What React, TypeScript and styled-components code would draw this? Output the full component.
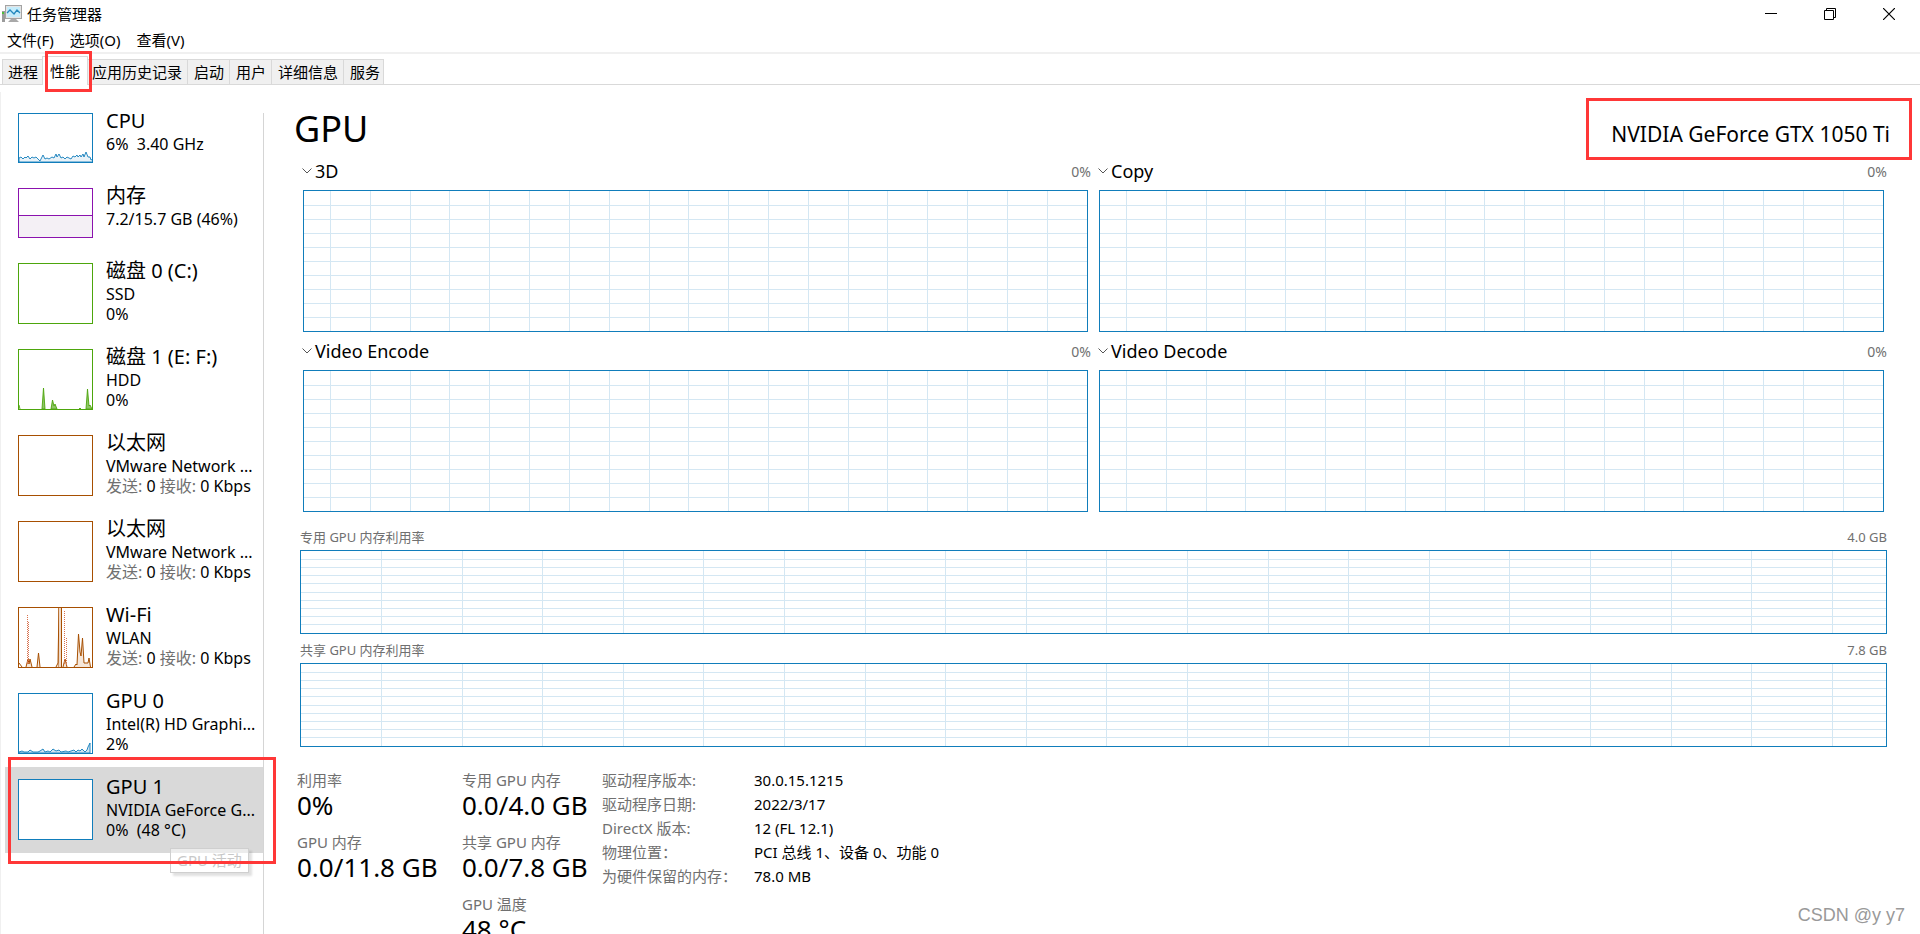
import React from "react";
import styled, { createGlobalStyle, css } from "styled-components";

const BLUE = "#117dbb";
const PURPLE = "#8b12ae";
const GREEN = "#4da60c";
const BROWN = "#a74f01";

const GlobalStyle = createGlobalStyle`
  * { box-sizing: border-box; }
  body {
    margin: 0;
    background: #fff;
    color: #000;
    font-family: "Noto Sans", "Noto Sans CJK SC", sans-serif;
    font-size: 15px;
  }
  button { font: inherit; color: inherit; border: 0; background: none; padding: 0; }
  h1, h2, p, dl, dd, dt, ul { margin: 0; padding: 0; font-weight: 400; }
  ul { list-style: none; }
`;

const Window = styled.div`
  display: flex;
  flex-direction: column;
  height: 100vh;
  overflow: hidden;
  position: relative;
`;

const TitleBar = styled.header`
  display: flex;
  align-items: center;
  height: 28px;
  padding: 0 2px;
  flex: none;
`;

const AppTitle = styled.span`
  flex: 1;
  margin-left: 5px;
  line-height: 28px;
`;

const WindowButton = styled.button`
  display: flex;
  align-items: center;
  justify-content: center;
  width: 59px;
  height: 28px;
`;

const MenuBar = styled.nav`
  display: flex;
  gap: 16px;
  height: 26px;
  padding-left: 7px;
  border-bottom: 2px solid #f0f0f0;
  flex: none;
`;

const MenuItem = styled.button`
  line-height: 24px;
  height: 24px;
`;

const TabStrip = styled.div`
  display: flex;
  align-items: flex-end;
  height: 31px;
  padding-left: 2px;
  border-bottom: 1px solid #d9d9d9;
  flex: none;
`;

const Tab = styled.button<{ $active?: boolean }>`
  position: relative;
  height: 25px;
  line-height: 24px;
  padding: 0 5px 0 6px;
  background: #f0f0f0;
  border-top: 1px solid #d9d9d9;
  border-right: 1px solid #d9d9d9;
  white-space: nowrap;
  &:first-child { border-left: 1px solid #d9d9d9; padding-left: 5px; }
  &:last-child { padding-right: 3px; }
  ${(p) =>
    p.$active &&
    css`
      z-index: 1;
      height: 29px;
      line-height: 26px;
      padding: 0 7px;
      margin: 0 -2px -1px;
      background: #fff;
      border-left: 1px solid #d9d9d9;
    `}
`;

const Highlight = styled.span<{ $inset: string }>`
  position: absolute;
  inset: ${(p) => p.$inset};
  border: 3px solid #ff3737;
  pointer-events: none;
  z-index: 3;
`;

const Body = styled.div`
  display: flex;
  flex: 1;
  min-height: 0;
  margin-top: 7px;
  border-left: 1px solid #f0f0f0;
`;

const Sidebar = styled.ul`
  width: 262px;
  flex: none;
  padding: 9px 0 0 4px;
`;

const SideItem = styled.li`
  position: relative;
`;

const SideButton = styled.button<{ $selected?: boolean }>`
  display: flex;
  align-items: flex-start;
  gap: 13px;
  width: 100%;
  padding: 0 0 13px 13px;
  text-align: left;
  background: ${(p) => (p.$selected ? "#d9d9d9" : "transparent")};
`;

const Thumb = styled.svg<{ $color: string; $tall?: boolean }>`
  flex: none;
  display: block;
  width: 75px;
  height: ${(p) => (p.$tall ? 61 : 50)}px;
  margin-top: 12px;
  background: #fff;
  border: 1px solid ${(p) => p.$color};
`;

const SideText = styled.span`
  display: block;
  min-width: 0;
  height: 60px;
  padding-top: 7px;
  white-space: nowrap;
`;

const SideTitle = styled.span`
  display: block;
  font-size: 20px;
  line-height: 26px;
`;

const SideLine = styled.span`
  display: block;
  font-size: 16px;
  line-height: 20px;
`;

const Muted = styled.span`
  color: #707070;
`;

const Tooltip = styled.span`
  position: absolute;
  left: 165px;
  top: 81px;
  height: 25px;
  padding: 0 6px;
  line-height: 23px;
  color: #c8c8c8;
  background: rgba(255, 255, 255, 0.5);
  border: 1px solid #cfcfcf;
  box-shadow: 3px 3px 2px rgba(0, 0, 0, 0.12);
  white-space: nowrap;
  z-index: 2;
`;

const Main = styled.main`
  flex: 1;
  min-width: 0;
  margin-top: 21px;
  padding: 0 33px 0 36px;
  border-left: 1px solid #d5d5d5;
`;

const PageHeader = styled.div`
  display: flex;
  justify-content: space-between;
  height: 39px;
  margin: 0 -3px 0 -6px;
`;

const PageTitle = styled.h1`
  font-size: 36px;
  line-height: 32px;
`;

const DeviceName = styled.h2`
  position: relative;
  font-size: 21px;
  line-height: 42px;
  white-space: nowrap;
`;

const Engines = styled.div`
  display: grid;
  grid-template-columns: 1fr 1fr;
  column-gap: 11px;
  padding: 0 3px;
`;

const EngineHead = styled.div`
  display: flex;
  align-items: center;
  justify-content: space-between;
  height: 38px;
  margin: 0 -3px 0 -1px;
`;

const EngineButton = styled.button`
  display: flex;
  align-items: center;
  gap: 3px;
  font-size: 18px;
  line-height: 38px;
`;

const Scale = styled.span`
  font-size: 14px;
  color: #707070;
`;

const Chart = styled.svg<{ $h: number }>`
  display: block;
  width: 100%;
  height: ${(p) => p.$h}px;
  border: 1px solid ${BLUE};
  shape-rendering: crispEdges;
`;

const MemoryList = styled.section`
  padding-top: 9px;
`;

const MemoryHead = styled.div`
  display: flex;
  justify-content: space-between;
  padding-top: 3px;
  line-height: 26px;
  font-size: 13px;
  color: #707070;
`;

const Stats = styled.section`
  display: grid;
  grid-template-columns: 165px 140px auto;
  justify-content: start;
  margin: 21px 0 0 -3px;
`;

const StatColumn = styled.dl`
  display: flex;
  flex-direction: column;
  gap: 12px;
  padding-top: 2px;
  white-space: nowrap;
`;

const StatLabel = styled.dt`
  line-height: 20px;
  color: #707070;
`;

const StatValue = styled.dd`
  font-size: 26px;
  line-height: 30px;
`;

const Details = styled.dl`
  display: grid;
  grid-template-columns: 152px auto;
  align-content: start;
  line-height: 24px;
  white-space: nowrap;
`;

const DetailName = styled.dt`
  color: #707070;
`;

const Watermark = styled.span`
  position: absolute;
  right: 15px;
  bottom: 7px;
  font-family: "Liberation Sans", sans-serif;
  font-size: 18px;
  line-height: 24px;
  color: #999;
`;

function AppIcon() {
  return (
    <svg width="20" height="18" viewBox="0 0 20 18">
      <rect x="0" y="6" width="3" height="11" fill="#9b9b9b" />
      <rect x="0" y="7" width="2" height="2" fill="#4fbf3a" />
      <path d="M9 14h5l3 3H6z" fill="#a9a9a9" />
      <rect x="3.5" y="0.5" width="16" height="13" fill="#e4e4e4" stroke="#a3a3a3" />
      <rect x="5" y="2" width="13" height="10" fill="#c5ecfb" />
      <path d="M5 8l3-3 4 4 3-4 3 3" fill="none" stroke="#2488bd" strokeWidth="1.3" />
    </svg>
  );
}

function Chevron() {
  return (
    <svg width="10" height="6" viewBox="0 0 10 6">
      <path d="M0.5 0.5l4.5 4.5 4.5-4.5" fill="none" stroke="#555" />
    </svg>
  );
}

const STEP = 5.085;

function Grid({ height, fromRight }: { height: number; fromRight?: boolean }) {
  const cols = Array.from({ length: 19 }, (_, i) =>
    fromRight ? 100 - (i + 1) * STEP : (i + 1) * STEP
  );
  const rows = Array.from({ length: 9 }, (_, i) => (i + 1) * 10);
  return (
    <Chart $h={height} aria-hidden="true">
      {cols.map((x) => (
        <line key={`c${x}`} x1={`${x}%`} x2={`${x}%`} y1="0" y2="100%" stroke="#d4e7f3" />
      ))}
      {rows.map((y) => (
        <line key={`r${y}`} x1="0" x2="100%" y1={`${y}%`} y2={`${y}%`} stroke="#d4e7f3" />
      ))}
    </Chart>
  );
}

type Side = {
  name: string;
  color: string;
  lines: React.ReactNode[];
  drawing?: React.ReactNode;
  selected?: boolean;
};

const traffic = (
  <>
    <Muted>发送:</Muted> 0 <Muted>接收:</Muted> 0 Kbps
  </>
);

const sideItems: Side[] = [
  {
    name: "CPU",
    color: BLUE,
    lines: ["6%\u00a0 3.40 GHz"],
    drawing: (
      <path
        d="M0 44l2-1 2 2 2-2 1 1 2-2 2 3 2-2 2 1 2-1 2 2 2 2 3-6 2 4 2-1 2 1 3-2 2 1 2-4 1 3 2-3 2 4 2-1 2 2 2-2 2 1 2 1 2-3 2 1 2-2 1 2 2-2 1 2 2-3 1 3 2-5 2 5 2 0 1 3 2-1V48H0z"
        fill="#e9f2f8"
        stroke={BLUE}
        strokeWidth="0.9"
      />
    ),
  },
  {
    name: "内存",
    color: PURPLE,
    lines: ["7.2/15.7 GB (46%)"],
    drawing: (
      <>
        <rect x="0" y="26" width="73" height="22" fill="#f4f0f5" />
        <path d="M0 26.5H73" stroke={PURPLE} />
      </>
    ),
  },
  { name: "磁盘 0 (C:)", color: GREEN, lines: ["SSD", "0%"] },
  {
    name: "磁盘 1 (E: F:)",
    color: GREEN,
    lines: ["HDD", "0%"],
    drawing: (
      <path
        d="M0 55l1 4M23 59l1.500-21 1.500 21zM32 59l1.500-9 1.500 6 1-2 2 5zM60 59l1-1 1 1M67 59l1.500-20 1.500 17 1-1 2 4z"
        fill="#8fc567"
        stroke={GREEN}
        strokeWidth="0.9"
      />
    ),
  },
  { name: "以太网", color: BROWN, lines: ["VMware Network ...", traffic] },
  { name: "以太网", color: BROWN, lines: ["VMware Network ...", traffic] },
  {
    name: "Wi-Fi",
    color: BROWN,
    lines: ["WLAN", traffic],
    drawing: (
      <>
        <path d="M0 55l3 4M7 59l2-8 1 5 1-5 2 8M18 59l1.500-14 1.500 14M37 59l2-4 1-55V59M42.500 0V59M44 59l2-8 2 8M55 59l2-3 1 1 1.500-31 1.500 18 1 4 1.500-18 1.500 25h4l1-5 1.500 9" fill="#f5e7da" stroke={BROWN} />
        <path d="M41 0V59" stroke="#eed8c7" strokeWidth="2" />
        <path d="M8.500 7V56M9.500 14V56M45.500 3V56M47.500 30V58" fill="none" stroke="#d9714d" strokeDasharray="1 1" />
      </>
    ),
  },
  {
    name: "GPU 0",
    color: BLUE,
    lines: ["Intel(R) HD Graphi...", "2%"],
    drawing: (
      <path
        d="M0 58l3-1 2 1 4 0 2-2 3 2 5 0 2-1 3-2 2 3 3-1 2 1 3-3 3 2 3-1 2 2 5-1 2 1 3-1 3-1 2 2 2-2 2 1 2-2 3 3 2-2 1-3 2-4V59H0z"
        fill="#cfe3f0"
        stroke={BLUE}
        strokeWidth="0.9"
      />
    ),
  },
  {
    name: "GPU 1",
    color: BLUE,
    lines: ["NVIDIA GeForce G...", "0%\u00a0 (48 °C)"],
    selected: true,
  },
];

const tabs = ["进程", "性能", "应用历史记录", "启动", "用户", "详细信息", "服务"];
const engines = ["3D", "Copy", "Video Encode", "Video Decode"];
const memories = [
  ["专用 GPU 内存利用率", "4.0 GB"],
  ["共享 GPU 内存利用率", "7.8 GB"],
];
const statColumns = [
  [
    ["利用率", "0%"],
    ["GPU 内存", "0.0/11.8 GB"],
  ],
  [
    ["专用 GPU 内存", "0.0/4.0 GB"],
    ["共享 GPU 内存", "0.0/7.8 GB"],
    ["GPU 温度", "48 °C"],
  ],
];
const details = [
  ["驱动程序版本:", "30.0.15.1215"],
  ["驱动程序日期:", "2022/3/17"],
  ["DirectX 版本:", "12 (FL 12.1)"],
  ["物理位置：", "PCI 总线 1、设备 0、功能 0"],
  ["为硬件保留的内存：", "78.0 MB"],
];

export default function App() {
  return (
    <Window>
      <GlobalStyle />
      <TitleBar>
        <AppIcon />
        <AppTitle>任务管理器</AppTitle>
        <WindowButton aria-label="最小化">
          <svg width="12" height="12" shapeRendering="crispEdges">
            <path d="M0 5.500H12" stroke="#000" />
          </svg>
        </WindowButton>
        <WindowButton aria-label="还原">
          <svg width="12" height="12" fill="none" stroke="#000">
            <path d="M0.500 2.500h9v9h-9zM2.500 2.500v-2h9v9h-2" />
          </svg>
        </WindowButton>
        <WindowButton aria-label="关闭">
          <svg width="12" height="12" stroke="#000">
            <path d="M0 0L12 12M12 0L0 12" strokeWidth="1.200" />
          </svg>
        </WindowButton>
      </TitleBar>
      <MenuBar>
        <MenuItem>文件(F)</MenuItem>
        <MenuItem>选项(O)</MenuItem>
        <MenuItem>查看(V)</MenuItem>
      </MenuBar>
      <TabStrip role="tablist">
        {tabs.map((t, i) => (
          <Tab key={t} role="tab" aria-selected={i === 1} $active={i === 1}>
            {t}
            {i === 1 && <Highlight $inset="-6px -5px -7px 2px" />}
          </Tab>
        ))}
      </TabStrip>
      <Body>
        <Sidebar>
          {sideItems.map((s, i) => (
            <SideItem key={i}>
              <SideButton $selected={s.selected}>
                <Thumb $color={s.color} $tall={s.lines.length > 1} aria-hidden="true">
                  {s.drawing}
                </Thumb>
                <SideText>
                  <SideTitle>{s.name}</SideTitle>
                  {s.lines.map((l, j) => (
                    <SideLine key={j}>{l}</SideLine>
                  ))}
                </SideText>
              </SideButton>
              {s.selected && (
                <>
                  <Tooltip role="tooltip">GPU 活动</Tooltip>
                  <Highlight $inset="-10px -13px -11px 3px" />
                </>
              )}
            </SideItem>
          ))}
        </Sidebar>
        <Main>
          <PageHeader>
            <PageTitle>GPU</PageTitle>
            <DeviceName>
              NVIDIA GeForce GTX 1050 Ti
              <Highlight $inset="-15px -22px -8px -25px" />
            </DeviceName>
          </PageHeader>
          <Engines>
            {engines.map((e) => (
              <div key={e}>
                <EngineHead>
                  <EngineButton>
                    <Chevron />
                    {e}
                  </EngineButton>
                  <Scale>0%</Scale>
                </EngineHead>
                <Grid height={142} fromRight />
              </div>
            ))}
          </Engines>
          <MemoryList>
            {memories.map(([label, max]) => (
              <div key={label}>
                <MemoryHead>
                  <span>{label}</span>
                  <span>{max}</span>
                </MemoryHead>
                <Grid height={84} />
              </div>
            ))}
          </MemoryList>
          <Stats>
            {statColumns.map((col, i) => (
              <StatColumn key={i}>
                {col.map(([label, value]) => (
                  <div key={label}>
                    <StatLabel>{label}</StatLabel>
                    <StatValue>{value}</StatValue>
                  </div>
                ))}
              </StatColumn>
            ))}
            <Details>
              {details.map(([name, value]) => (
                <React.Fragment key={name}>
                  <DetailName>{name}</DetailName>
                  <dd>{value}</dd>
                </React.Fragment>
              ))}
            </Details>
          </Stats>
        </Main>
      </Body>
      <Watermark>CSDN @y y7</Watermark>
    </Window>
  );
}
